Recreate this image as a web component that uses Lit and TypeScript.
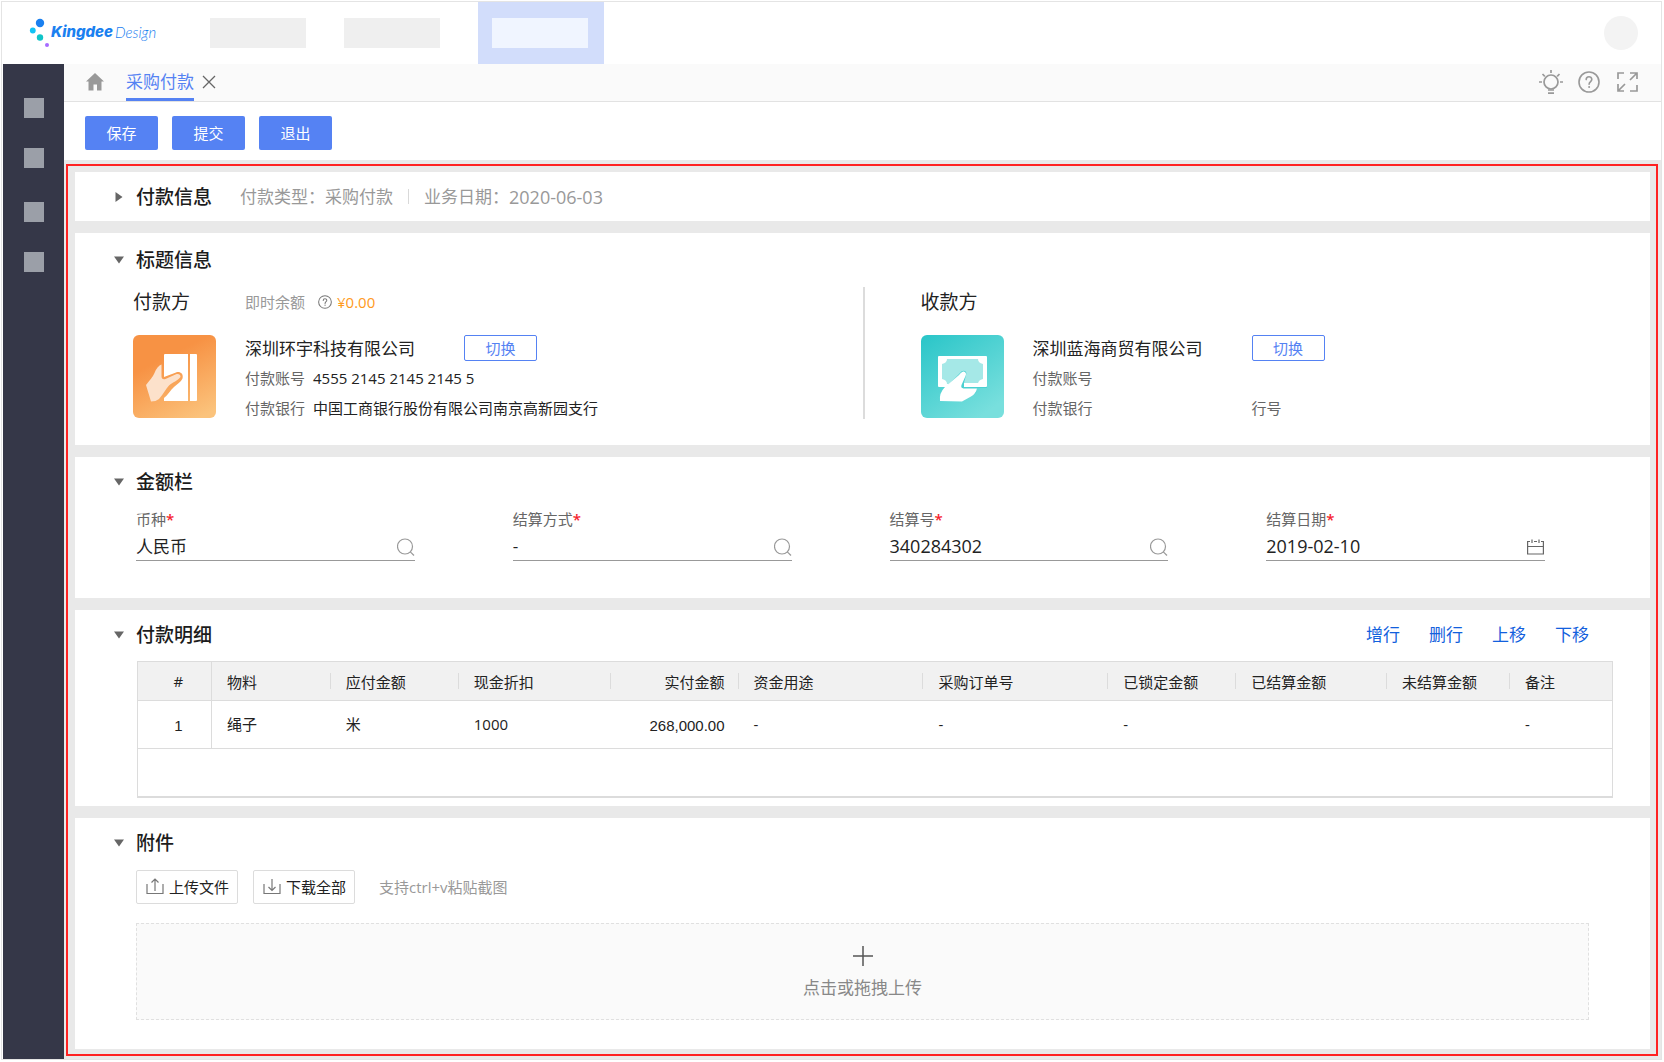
import { LitElement, html, css, svg, nothing } from "lit";
import { customElement, property } from "lit/decorators.js";

const base = css`
  * {
    box-sizing: border-box;
  }
  h2,
  h3,
  p,
  dl,
  dd {
    margin: 0;
  }
  button,
  input {
    font: inherit;
    color: inherit;
    margin: 0;
    padding: 0;
    border: 0;
    background: none;
  }
  button {
    cursor: pointer;
  }
  svg {
    display: block;
    flex: none;
  }
`;

const questionIcon = (size: number) => html`
  <svg width=${size} height=${size} viewBox="0 0 22 22" fill="none" stroke="currentColor" stroke-width="1.6">
    <circle cx="11" cy="11" r="10"></circle>
    <path d="M8.2 8.6c0-3.8 5.6-3.8 5.6 0 0 2-2.7 2-2.7 4.6" stroke-linecap="round"></path>
    <circle cx="11.1" cy="16" r="1" fill="currentColor" stroke="none"></circle>
  </svg>
`;

@customElement("section-card")
export class SectionCard extends LitElement {
  @property() heading = "";
  @property({ type: Boolean, reflect: true }) collapsed = false;

  static styles = [
    base,
    css`
      :host {
        display: block;
        background: #fff;
      }
      .head {
        display: flex;
        align-items: center;
        height: 49px;
        padding: 0 61px 0 39px;
      }
      .toggle {
        display: flex;
        align-items: center;
        gap: 12px;
        font-size: 19px;
        line-height: 28px;
        color: #1c1c1c;
      }
      .toggle svg {
        fill: #666;
      }
      .title {
        font-size: 19px;
        font-weight: 500;
      }
    `,
  ];

  private toggle() {
    this.collapsed = !this.collapsed;
  }

  render() {
    return html`
      <section>
        <div class="head">
          <button class="toggle" aria-expanded=${this.collapsed ? "false" : "true"} @click=${this.toggle}>
            <svg width="10" height="10" viewBox="0 0 10 10">
              ${this.collapsed ? svg`<path d="M1.500 0L8.500 5L1.500 10Z"></path>` : svg`<path d="M0 1.500H10L5 8.500Z"></path>`}
            </svg>
            <span class="title">${this.heading}</span>
          </button>
          <slot name="extra"></slot>
        </div>
        ${this.collapsed ? nothing : html`<slot></slot>`}
      </section>
    `;
  }
}

interface Field {
  id: string;
  label: string;
  value: string;
  kind: "search" | "date";
}

const fields: Field[] = [
  { id: "currency", label: "币种", value: "人民币", kind: "search" },
  { id: "method", label: "结算方式", value: "-", kind: "search" },
  { id: "number", label: "结算号", value: "340284302", kind: "search" },
  { id: "date", label: "结算日期", value: "2019-02-10", kind: "date" },
];

interface Column {
  title: string;
  width: number;
  value: string;
  align?: "right" | "center";
}

const columns: Column[] = [
  { title: "#", width: 74, value: "1", align: "center" },
  { title: "物料", width: 119, value: "绳子" },
  { title: "应付金额", width: 128, value: "米" },
  { title: "现金折扣", width: 152, value: "1000" },
  { title: "实付金额", width: 128, value: "268,000.00", align: "right" },
  { title: "资金用途", width: 185, value: "-" },
  { title: "采购订单号", width: 185, value: "-" },
  { title: "已锁定金额", width: 128, value: "-" },
  { title: "已结算金额", width: 151, value: "" },
  { title: "未结算金额", width: 123, value: "" },
  { title: "备注", width: 102, value: "-" },
];
const totalWidth = columns.reduce((sum, c) => sum + c.width, 0);

@customElement("app-root")
export class AppRoot extends LitElement {
  static styles = [
    base,
    css`
      :host {
        display: block;
        min-height: 100vh;
        padding: 1px 2px 2px 1px;
        background: #fff;
        color: #222;
        font-family: "Open Sans", "Noto Sans CJK SC", sans-serif;
        font-size: 15px;
        line-height: 24px;
        box-sizing: border-box;
      }
      .frame {
        display: flex;
        flex-direction: column;
        min-height: calc(100vh - 3px);
        border: 1px solid #e4e4e4;
      }
      .topbar {
        display: flex;
        align-items: center;
        height: 62px;
        padding: 0 23px 0 26px;
      }
      .logo {
        display: flex;
        align-items: center;
        width: 182px;
        color: #1a80f0;
        text-decoration: none;
        font-style: italic;
        font-size: 15px;
      }
      .logo strong,
      .logo span {
        padding-bottom: 2px;
      }
      .logo strong {
        margin-right: 2px;
        font-family: Inter, "Liberation Sans", sans-serif;
        font-weight: 800;
      }
      .logo span {
        font-family: Lato, "Liberation Sans", sans-serif;
        font-weight: 300;
      }
      .nav {
        display: flex;
        align-self: stretch;
        flex: 1;
        gap: 38px;
      }
      .nav-item {
        display: flex;
        align-items: center;
      }
      .nav-item i {
        width: 96px;
        height: 30px;
        background: #efefef;
      }
      .nav-item.active {
        padding: 0 16px 0 14px;
        background: #d2ddfb;
      }
      .nav-item.active i {
        background: #f0f5ff;
      }
      .avatar {
        width: 34px;
        height: 34px;
        border-radius: 50%;
        background: #f3f3f3;
      }
      .body {
        display: flex;
        flex: 1;
      }
      .side {
        display: flex;
        flex-direction: column;
        align-items: center;
        gap: 34px;
        width: 62px;
        padding-top: 34px;
        border-left: 1px solid #fff;
        background: #353748;
      }
      .side-group {
        display: grid;
        gap: 30px;
      }
      .side button {
        width: 20px;
        height: 20px;
        background: #9b9fa8;
      }
      .main {
        display: flex;
        flex-direction: column;
        flex: 1;
        min-width: 0;
        background: #e9e9e9;
      }
      .tabs {
        display: flex;
        align-items: center;
        height: 38px;
        padding: 0 22px;
        border-bottom: 1px solid #e2e2e2;
        background: #fafafa;
      }
      .home,
      .close,
      .tools {
        padding-bottom: 2px;
      }
      .home {
        margin-right: 22px;
        color: #999;
      }
      .tab {
        align-self: stretch;
        padding-top: 2px;
        border-bottom: 3px solid #5582f3;
        font-size: 17px;
        line-height: 32px;
        color: #5582f3;
        text-decoration: none;
      }
      .close {
        margin-left: 8px;
        color: #666;
      }
      .tools {
        display: flex;
        gap: 15px;
        margin-left: auto;
        color: #999;
      }
      .actions {
        display: flex;
        gap: 14px;
        padding: 14px 21px 10px;
        background: #fff;
      }
      .primary {
        width: 73px;
        height: 34px;
        border-radius: 2px;
        background: #5582f3;
        color: #fff;
      }
      .outlined {
        display: flex;
        flex-direction: column;
        gap: 12px;
        flex: 1;
        margin: 4px 3px 3px 2px;
        padding: 6px 6px 4px 7px;
        border: 2px solid #ff2222;
      }
      .summary {
        display: flex;
        align-items: center;
        margin-left: 28px;
        font-size: 17px;
        color: #999;
      }
      .summary .sep {
        width: 1px;
        height: 15px;
        margin: 0 15px;
        background: #d9d9d9;
      }
      .num {
        font-size: 18px;
      }
      .headline {
        padding-top: 2px;
      }
      .parties {
        display: grid;
        grid-template-columns: 1fr 1fr;
        padding: 3px 0 26px;
      }
      .party {
        display: grid;
        grid-template-columns: 83px 1fr;
        grid-template-rows: 30px 84px;
        column-gap: 29px;
        row-gap: 18px;
        padding-left: 58px;
      }
      .party + .party {
        border-left: 2px solid #dcdcdc;
        padding-left: 56px;
      }
      .party h3 {
        font-size: 19px;
        font-weight: 400;
        line-height: 30px;
        white-space: nowrap;
      }
      .balance {
        display: flex;
        align-items: center;
        color: #999;
      }
      .balance svg {
        margin: 0 5px 0 13px;
        color: #777;
      }
      .balance b {
        font-weight: 400;
        color: #ff9a1c;
      }
      .tile {
        width: 83px;
        height: 83px;
      }
      .info {
        display: grid;
        grid-template-columns: 219px 1fr;
        grid-template-rows: 28px 30px 30px;
        align-items: center;
        white-space: nowrap;
      }
      .company {
        font-size: 17px;
      }
      .change {
        align-self: start;
      }
      .switch {
        display: block;
        width: 73px;
        height: 26px;
        border: 1px solid #5582f3;
        border-radius: 2px;
        color: #5582f3;
        line-height: 22px;
      }
      .pair {
        display: flex;
        gap: 8px;
      }
      .pair.wide {
        grid-column: 1 / -1;
      }
      .pair dt {
        width: 60px;
        color: #666;
      }
      .fields {
        display: grid;
        grid-template-columns: repeat(4, 1fr);
        column-gap: 98px;
        padding: 1px 105px 37px 61px;
      }
      .field label {
        display: block;
        color: #666;
      }
      .field em {
        font-style: normal;
        font-weight: 600;
        color: #f5222d;
      }
      .box {
        display: flex;
        align-items: center;
        height: 30px;
        border-bottom: 1px solid #999;
      }
      .box input {
        flex: 1;
        min-width: 0;
        height: 28px;
        font-size: 17px;
        outline: none;
      }
      .box input.num {
        font-size: 18px;
      }
      .box button {
        padding-top: 2px;
        color: #999;
      }
      .box.date button {
        color: #666;
      }
      .links {
        display: flex;
        gap: 29px;
        margin-left: auto;
        font-size: 17px;
      }
      .links a {
        color: #1260dd;
        text-decoration: none;
      }
      .table-wrap {
        margin: 2px 37px 0 62px;
        padding-bottom: 8px;
      }
      table {
        width: 100%;
        table-layout: fixed;
        border-collapse: separate;
        border-spacing: 0;
        border: 1px solid #dcdcdc;
        border-bottom-width: 2px;
      }
      th,
      td {
        padding: 0 15px;
        text-align: left;
        font-weight: 400;
        white-space: nowrap;
        border-bottom: 1px solid #dcdcdc;
      }
      th {
        height: 39px;
        padding-top: 2px;
        background: linear-gradient(#dcdcdc, #dcdcdc) right center / 1px 16px no-repeat #f1f1f1;
      }
      th:first-child,
      th:last-child {
        background: #f1f1f1;
      }
      td {
        height: 48px;
        padding-bottom: 2px;
      }
      tr.blank td {
        border-bottom: 0;
        height: 47px;
      }
      .center {
        padding: 0 12px 0 20px;
        text-align: center;
        border-right: 1px solid #dcdcdc;
      }
      .right {
        padding-right: 14px;
        text-align: right;
      }
      td.center,
      td.right {
        padding-top: 2px;
        padding-bottom: 0;
        font-family: "Liberation Sans", sans-serif;
      }
      .attach {
        padding: 3px 61px 29px;
      }
      .bar {
        display: flex;
        align-items: center;
        gap: 15px;
      }
      .ghost {
        display: flex;
        align-items: center;
        justify-content: center;
        gap: 5px;
        width: 102px;
        height: 34px;
        padding-left: 1px;
        border: 1px solid #dcdcdc;
        border-radius: 2px;
      }
      .ghost svg {
        color: #777;
      }
      .hint {
        margin-left: 9px;
        color: #999;
      }
      .drop {
        display: flex;
        flex-direction: column;
        align-items: center;
        justify-content: center;
        gap: 10px;
        width: 100%;
        height: 97px;
        margin-top: 19px;
        padding-top: 2px;
        border: 1px dashed #e0e0e0;
        background: #fafafa;
        color: #888;
        font-size: 17px;
      }
      .drop svg {
        color: #555;
      }
    `,
  ];

  private payTile() {
    return html`
      <svg class="tile" viewBox="0 0 83 83">
        <defs>
          <linearGradient id="pay" x1="0.3" y1="0" x2="0.8" y2="1">
            <stop offset="0.25" stop-color="#f79244"></stop>
            <stop offset="1" stop-color="#fbc37c"></stop>
          </linearGradient>
        </defs>
        <rect width="83" height="83" rx="6" fill="url(#pay)"></rect>
        <path fill="#fff" d="M32 19h23v47H31V63c4-3 6.500-8 10-11 3-3 7-5 8.500-8.500C51 38 46 36 43 37.500L31 42V20q0-1 1-1z"></path>
        <path fill="#fff" d="M57 19h6q1 0 1 1v45q0 1-1 1h-6z"></path>
        <path fill="#fce1cb" d="M28.500 29.500q-4 1-7 8.500c-1.500 4-5.500 8-8.500 12l5 16.500q5 0 8-2.500c4.500-5 6.500-10 10-13.500 4-3.500 8.500-4.500 11.500-8.500 0-3-2.500-3.500-5-2.500l-10 4.500q-4 1-4-3z"></path>
      </svg>
    `;
  }

  private receiveTile() {
    return html`
      <svg class="tile" viewBox="0 0 83 83">
        <defs>
          <linearGradient id="receive" x1="0" y1="0" x2="0.7" y2="1">
            <stop offset="0" stop-color="#29c5c8"></stop>
            <stop offset="1" stop-color="#78dfdd"></stop>
          </linearGradient>
        </defs>
        <rect width="83" height="83" rx="6" fill="url(#receive)"></rect>
        <rect x="17" y="21" width="49" height="31" rx="1" fill="#fff"></rect>
        <path fill="#a5e8e7" d="M26 24h31q0 4 5 5v15q-5 1-5 5H26q0-4-5-5V29q5-1 5-5z"></path>
        <path fill="#4bd0d1" d="M25 52l14-14q2-3 5-2 2 1 1 4l-2 8h23v5H56l-1 5-16 4z"></path>
        <path fill="#fff" d="M43 48h23v3q0 1-1 1H43z"></path>
        <path fill="#fff" d="M19 66q-1-8 5-14l14-12q3-4 5-3.500 3 1 1.500 4.500l-4 9q-1 3 2 3.500H56q-1 5-6 8l-9 5z"></path>
      </svg>
    `;
  }

  private fieldIcon(kind: Field["kind"]) {
    return kind === "search"
      ? html`<svg width="18" height="18" viewBox="0 0 18 18" fill="none" stroke="currentColor" stroke-width="1.200">
          <circle cx="8" cy="8.500" r="7.500"></circle>
          <path d="M13.300 13.800L17 17.500"></path>
        </svg>`
      : html`<svg width="18" height="18" viewBox="0 0 18 18" fill="none" stroke="currentColor" stroke-width="1.200">
          <path d="M3 3.500H0.600V16H16.400V3.500H14M7 3.500H10M5 1.500V5M12 1.500V5M0.600 8.500H16.400"></path>
        </svg>`;
  }

  render() {
    return html`
      <div class="frame">
        <header class="topbar">
          <a class="logo" href="#">
            <svg width="23" height="30" viewBox="0 0 23 30">
              <circle cx="12" cy="5" r="4.200" fill="#1a80f0"></circle>
              <circle cx="4.800" cy="12.500" r="2.900" fill="#12c3f5"></circle>
              <circle cx="12" cy="19.500" r="3.200" fill="#10c4c8"></circle>
              <circle cx="19" cy="27" r="2" fill="#a66bff"></circle>
            </svg>
            <strong>Kingdee</strong><span>Design</span>
          </a>
          <nav class="nav">
            <div class="nav-item"><i></i></div>
            <div class="nav-item"><i></i></div>
            <div class="nav-item active"><i></i></div>
          </nav>
          <div class="avatar"></div>
        </header>
        <div class="body">
          <nav class="side" aria-label="菜单">
            <div class="side-group">
              <button aria-label="菜单 1"></button>
              <button aria-label="菜单 2"></button>
            </div>
            <div class="side-group">
              <button aria-label="菜单 3"></button>
              <button aria-label="菜单 4"></button>
            </div>
          </nav>
          <div class="main">
            <div class="tabs">
              <button class="home" aria-label="首页">
                <svg width="18" height="18" viewBox="0 0 18 18" fill="currentColor">
                  <path d="M9 0L18 8.500H15.500V17.500H11V11.500H7.500V17.500H2.500V8.500H0Z"></path>
                </svg>
              </button>
              <a class="tab" href="#">采购付款</a>
              <button class="close" aria-label="关闭">
                <svg width="14" height="14" viewBox="0 0 14 14" stroke="currentColor" stroke-width="1.300">
                  <path d="M1 1L13 13M13 1L1 13"></path>
                </svg>
              </button>
              <div class="tools">
                <button aria-label="提示">
                  <svg width="24" height="24" viewBox="0 0 24 24" fill="none" stroke="currentColor" stroke-width="1.700">
                    <circle cx="12" cy="12" r="7"></circle>
                    <path d="M12 0V3M0 12H3M21 12H24M3.500 4L5.800 6.300M20.500 4L18.200 6.300M9 20H15M9 23.200H15"></path>
                  </svg>
                </button>
                <button aria-label="帮助">${questionIcon(22)}</button>
                <button aria-label="全屏">
                  <svg width="24" height="22" viewBox="0 0 24 22" fill="none" stroke="currentColor" stroke-width="1.700">
                    <path d="M3 8V2H9M15 2H22V8M22 2L15 9M22 14V20H15M3 13V20H9M3 20L10 13"></path>
                  </svg>
                </button>
              </div>
            </div>
            <div class="actions">
              <button class="primary">保存</button>
              <button class="primary">提交</button>
              <button class="primary">退出</button>
            </div>
            <main class="outlined">
              <section-card heading="付款信息" collapsed>
                <div class="summary" slot="extra">
                  <span>付款类型：采购付款</span><span class="sep"></span><span>业务日期：</span
                  ><span class="num">2020-06-03</span>
                </div>
              </section-card>

              <section-card class="headline" heading="标题信息">
                <div class="parties">
                  <div class="party">
                    <h3>付款方</h3>
                    <div class="balance">即时余额 ${questionIcon(14)}<b>¥0.00</b></div>
                    ${this.payTile()}
                    <dl class="info">
                      <dd class="company">深圳环宇科技有限公司</dd>
                      <dd class="change"><button class="switch">切换</button></dd>
                      <div class="pair wide"><dt>付款账号</dt><dd>4555 2145 2145 2145 5</dd></div>
                      <div class="pair wide"><dt>付款银行</dt><dd>中国工商银行股份有限公司南京高新园支行</dd></div>
                    </dl>
                  </div>
                  <div class="party">
                    <h3>收款方</h3>
                    <div class="balance"></div>
                    ${this.receiveTile()}
                    <dl class="info">
                      <dd class="company">深圳蓝海商贸有限公司</dd>
                      <dd class="change"><button class="switch">切换</button></dd>
                      <div class="pair wide"><dt>付款账号</dt></div>
                      <div class="pair"><dt>付款银行</dt></div>
                      <div class="pair"><dt>行号</dt></div>
                    </dl>
                  </div>
                </div>
              </section-card>

              <section-card heading="金额栏">
                <div class="fields">
                  ${fields.map(
                    (f) => html`
                      <div class="field">
                        <label for=${f.id}>${f.label}<em>*</em></label>
                        <div class="box ${f.kind}">
                          <input class=${/^\d/.test(f.value) ? "num" : ""} id=${f.id} .value=${f.value} />
                          <button aria-label="选择">${this.fieldIcon(f.kind)}</button>
                        </div>
                      </div>
                    `
                  )}
                </div>
              </section-card>

              <section-card heading="付款明细">
                <div class="links" slot="extra">
                  <a href="#">增行</a><a href="#">删行</a><a href="#">上移</a><a href="#">下移</a>
                </div>
                <div class="table-wrap">
                  <table>
                    <colgroup>
                      ${columns.map((c) => html`<col style="width:${(c.width / totalWidth) * 100}%" />`)}
                    </colgroup>
                    <thead>
                      <tr>
                        ${columns.map((c) => html`<th class=${c.align ?? ""}>${c.title}</th>`)}
                      </tr>
                    </thead>
                    <tbody>
                      <tr>
                        ${columns.map((c) => html`<td class=${c.align ?? ""}>${c.value}</td>`)}
                      </tr>
                      <tr class="blank">
                        <td colspan=${columns.length}></td>
                      </tr>
                    </tbody>
                  </table>
                </div>
              </section-card>

              <section-card heading="附件">
                <div class="attach">
                  <div class="bar">
                    <button class="ghost">
                      <svg width="18" height="18" viewBox="0 0 18 18" fill="none" stroke="currentColor" stroke-width="1.200">
                        <path d="M1 6V15.500H17V6M9 13V1M5.500 4.500L9 1L12.500 4.500"></path>
                      </svg>
                      上传文件
                    </button>
                    <button class="ghost">
                      <svg width="18" height="18" viewBox="0 0 18 18" fill="none" stroke="currentColor" stroke-width="1.200">
                        <path d="M1 6V15.500H17V6M9 1V12.500M5.500 9L9 12.500L12.500 9"></path>
                      </svg>
                      下载全部
                    </button>
                    <span class="hint">支持ctrl+v粘贴截图</span>
                  </div>
                  <button class="drop">
                    <svg width="20" height="20" viewBox="0 0 20 20" stroke="currentColor" stroke-width="1.500">
                      <path d="M10 0V20M0 10H20"></path>
                    </svg>
                    点击或拖拽上传
                  </button>
                </div>
              </section-card>
            </main>
          </div>
        </div>
      </div>
    `;
  }
}
